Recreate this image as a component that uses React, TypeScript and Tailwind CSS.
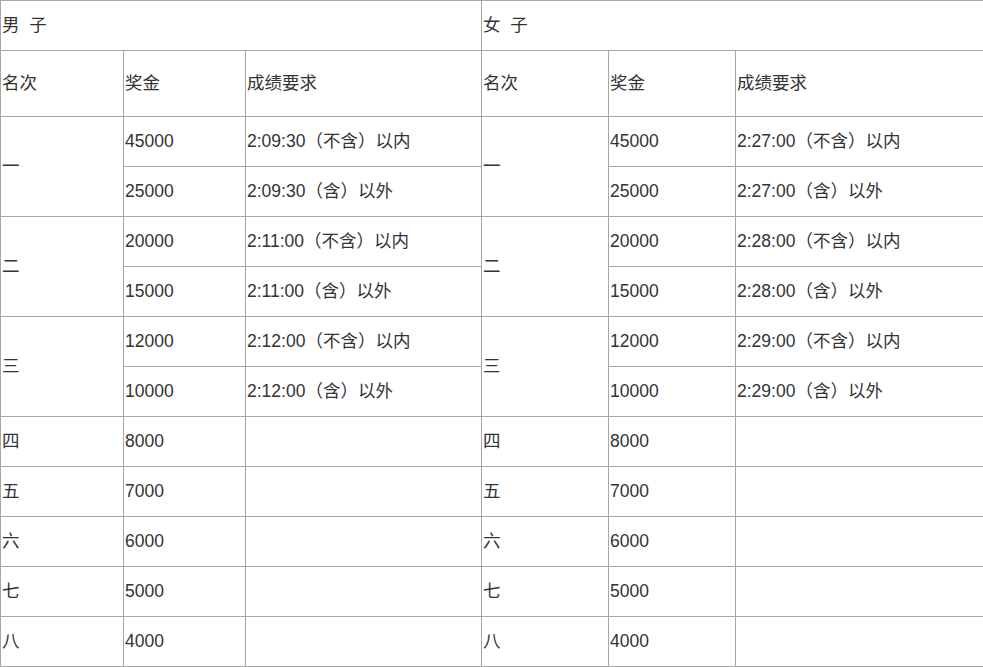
import React from "react";

interface PrizeRow {
  rank: string;
  prize: string;
  req: string;
  span?: number;
  skipRank?: boolean;
}

const men: PrizeRow[] = [
  { rank: "一", prize: "45000", req: "2:09:30（不含）以内", span: 2 },
  { rank: "", prize: "25000", req: "2:09:30（含）以外", skipRank: true },
  { rank: "二", prize: "20000", req: "2:11:00（不含）以内", span: 2 },
  { rank: "", prize: "15000", req: "2:11:00（含）以外", skipRank: true },
  { rank: "三", prize: "12000", req: "2:12:00（不含）以内", span: 2 },
  { rank: "", prize: "10000", req: "2:12:00（含）以外", skipRank: true },
  { rank: "四", prize: "8000", req: "" },
  { rank: "五", prize: "7000", req: "" },
  { rank: "六", prize: "6000", req: "" },
  { rank: "七", prize: "5000", req: "" },
  { rank: "八", prize: "4000", req: "" },
];

const women: PrizeRow[] = [
  { rank: "一", prize: "45000", req: "2:27:00（不含）以内", span: 2 },
  { rank: "", prize: "25000", req: "2:27:00（含）以外", skipRank: true },
  { rank: "二", prize: "20000", req: "2:28:00（不含）以内", span: 2 },
  { rank: "", prize: "15000", req: "2:28:00（含）以外", skipRank: true },
  { rank: "三", prize: "12000", req: "2:29:00（不含）以内", span: 2 },
  { rank: "", prize: "10000", req: "2:29:00（含）以外", skipRank: true },
  { rank: "四", prize: "8000", req: "" },
  { rank: "五", prize: "7000", req: "" },
  { rank: "六", prize: "6000", req: "" },
  { rank: "七", prize: "5000", req: "" },
  { rank: "八", prize: "4000", req: "" },
];

const cell = "border border-[#a6a6a6] px-[1px] py-0 align-middle text-left font-normal";

const Half = ({ row }: { row: PrizeRow }) => (
  <>
    {!row.skipRank && (
      <td className={cell} rowSpan={row.span ?? 1}>
        {row.rank}
      </td>
    )}
    <td className={cell}>{row.prize}</td>
    <td className={cell}>{row.req}</td>
  </>
);

export default function App() {
  return (
    <div
      className="bg-white text-[17.5px] text-[#333333]"
      style={{ fontFamily: '"Liberation Sans", "Noto Sans CJK SC", sans-serif' }}
    >
      <table className="w-[983px] table-fixed border-collapse">
        <colgroup>
          <col className="w-[123px]" />
          <col className="w-[122px]" />
          <col className="w-[236px]" />
          <col className="w-[127px]" />
          <col className="w-[127px]" />
          <col className="w-[248px]" />
        </colgroup>
        <tbody>
          <tr className="h-[50px]">
            <td className={cell} colSpan={3}>
              男&nbsp;&nbsp;子
            </td>
            <td className={cell} colSpan={3}>
              女&nbsp;&nbsp;子
            </td>
          </tr>
          <tr className="h-[66px]">
            <td className={cell}>名次</td>
            <td className={cell}>奖金</td>
            <td className={cell}>成绩要求</td>
            <td className={cell}>名次</td>
            <td className={cell}>奖金</td>
            <td className={cell}>成绩要求</td>
          </tr>
          {men.map((m, i) => (
            <tr key={i} className="h-[50px]">
              <Half row={m} />
              <Half row={women[i]} />
            </tr>
          ))}
        </tbody>
      </table>
    </div>
  );
}
